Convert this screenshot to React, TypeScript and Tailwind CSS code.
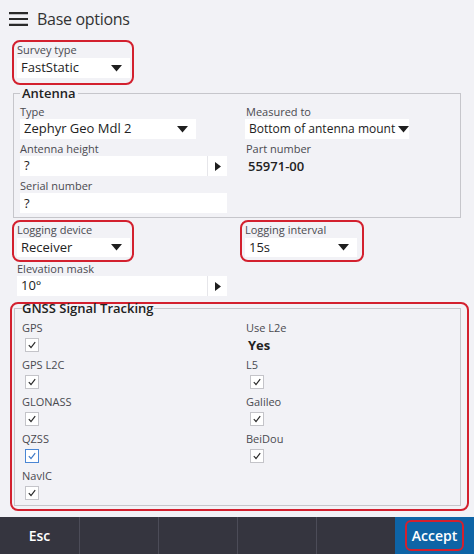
import React from 'react';

const font = { fontFamily: '"Open Sans", "Noto Sans", sans-serif' };

function Caret() {
    return (
        <svg width="11" height="7" viewBox="0 0 11 7" className="shrink-0">
            <path d="M0 0 H11 L5.5 6.5 Z" fill="#1f1f1f" />
        </svg>
    );
}

function Label({ children }: { children: React.ReactNode }) {
    return <div className="h-[14px] text-[11px] leading-[14px] text-[#4a4a50]">{children}</div>;
}

function Dropdown({
    value,
    width,
    h = 'h-[20px]',
    text = 'text-[13px]',
}: {
    value: string;
    width: string;
    h?: string;
    text?: string;
}) {
    return (
        <div className={`flex ${h} ${width} items-center justify-between gap-[3px] bg-white pl-[4px] pr-[8px]`}>
            <span className={`whitespace-nowrap ${text} font-medium text-[#222]`}>{value}</span>
            <Caret />
        </div>
    );
}

function ArrowInput({ value, width }: { value: string; width: string }) {
    return (
        <div className={`flex h-[20px] ${width} items-center bg-white`}>
            <span className="flex-1 pl-[4px] text-[13px] font-medium text-[#222]">{value}</span>
            <div className="flex h-full w-[20px] items-center justify-center border-l border-[#e6e6ea]">
                <svg width="6" height="9" viewBox="0 0 6 9">
                    <path d="M0 0 L6 4.5 L0 9 Z" fill="#1f1f1f" />
                </svg>
            </div>
        </div>
    );
}

function Check({ focused = false }: { focused?: boolean }) {
    return (
        <div
            className={`flex h-[14px] w-[14px] items-center justify-center bg-white border ${
                focused ? 'border-[#4a86d4]' : 'border-[#c4c4c9]'
            }`}
        >
            <svg width="12" height="12" viewBox="0 0 12 12">
                <path
                    d="M2.8 6.2 L5 8.5 L9.2 3.2"
                    fill="none"
                    stroke={focused ? '#3d78c6' : '#2a2a2a'}
                    strokeWidth="1.2"
                />
            </svg>
        </div>
    );
}

function CheckItem({ label, focused, inset = 'ml-[3px]' }: { label: string; focused?: boolean; inset?: string }) {
    return (
        <div>
            <Label>{label}</Label>
            <div className={`mt-[3px] ${inset}`}>
                <Check focused={focused} />
            </div>
        </div>
    );
}

export default function App() {
    return (
        <div className="flex h-[554px] w-[474px] flex-col overflow-hidden bg-[#f2f2f6] text-[#222]" style={font}>
            {/* header */}
            <header className="flex h-[38px] shrink-0 items-center gap-[9px] pl-[9px]">
                <svg width="19" height="14" viewBox="0 0 19 14">
                    <path d="M0 1.2 H19 M0 7 H19 M0 12.8 H19" stroke="#2a2a2a" strokeWidth="2.2" />
                </svg>
                <span className="text-[16px] tracking-[-0.3px] text-[#333]">Base options</span>
            </header>

            <div className="px-[12px]">
                {/* survey type */}
                <div className="mt-[2px] h-[45px] w-[122px] rounded-[8px] border-2 border-[#d3202e] px-[3px] pt-[1px]">
                    <Label>Survey type</Label>
                    <div className="mt-[1px]">
                        <Dropdown value="FastStatic" width="w-[113px]" />
                    </div>
                </div>

                {/* antenna */}
                <fieldset className="ml-[1px] w-[448px] border border-[#c6c6cb] pb-[4px] pl-[6px] pt-[4px]">
                    <legend className="px-[2px] text-[13px] font-semibold leading-[16px] text-[#222]">Antenna</legend>
                    <div className="grid grid-cols-[207px_1fr] gap-x-[18px] gap-y-[3px]">
                        <div>
                            <Label>Type</Label>
                            <Dropdown value="Zephyr Geo Mdl 2" width="w-[176px]" />
                        </div>
                        <div>
                            <div className="pl-[1px]">
                                <Label>Measured to</Label>
                            </div>
                            <Dropdown
                                value="Bottom of antenna mount"
                                width="w-[164px]"
                                h="h-[20px] pr-[4px]"
                                text="text-[12px]"
                            />
                        </div>
                        <div>
                            <Label>Antenna height</Label>
                            <ArrowInput value="?" width="w-[207px]" />
                        </div>
                        <div className="pl-[1px]">
                            <Label>Part number</Label>
                            <div className="h-[20px] pl-[2px] text-[13px] font-semibold leading-[20px]">55971-00</div>
                        </div>
                        <div>
                            <Label>Serial number</Label>
                            <div className="h-[20px] w-[207px] bg-white pl-[4px] text-[13px] font-medium leading-[20px]">?</div>
                        </div>
                    </div>
                </fieldset>

                {/* logging */}
                <div className="mt-[2px] flex items-start gap-[106px]">
                    <div className="h-[42px] w-[122px] rounded-[8px] border-2 border-[#d3202e] px-[3px] pt-[1px]">
                        <Label>Logging device</Label>
                        <div className="mt-[1px]">
                            <Dropdown value="Receiver" width="w-[113px]" h="h-[19px]" />
                        </div>
                    </div>
                    <div className="h-[42px] w-[124px] rounded-[8px] border-2 border-[#d3202e] px-[3px] pt-[1px]">
                        <Label>Logging interval</Label>
                        <div className="mt-[1px]">
                            <Dropdown value="15s" width="w-[112px]" h="h-[19px]" />
                        </div>
                    </div>
                </div>

                <div className="ml-[5px]">
                    <Label>Elevation mask</Label>
                    <ArrowInput value="10°" width="w-[210px]" />
                </div>

                {/* gnss */}
                <div className="-ml-[2px] mt-[6px] w-[459px] rounded-[8px] border-2 border-[#d3202e] pb-[3px] pl-[2px]">
                    <fieldset className="-mt-[2px] w-[447px] border border-[#c6c6cb] pb-[5px] pl-[7px] pt-[7px]">
                        <legend className="text-[13px] font-semibold leading-[12px] text-[#222]">GNSS Signal Tracking</legend>
                        <div className="grid grid-cols-[224px_1fr] gap-y-[6px]">
                            <CheckItem label="GPS" />
                            <div>
                                <Label>Use L2e</Label>
                                <div className="mt-[3px] h-[14px] pl-[2px] text-[13px] font-bold leading-[14px]">Yes</div>
                            </div>
                            <CheckItem label="GPS L2C" />
                            <CheckItem label="L5" inset="ml-[4px]" />
                            <CheckItem label="GLONASS" />
                            <CheckItem label="Galileo" inset="ml-[4px]" />
                            <CheckItem label="QZSS" focused />
                            <CheckItem label="BeiDou" inset="ml-[4px]" />
                            <CheckItem label="NavIC" />
                        </div>
                    </fieldset>
                </div>
            </div>

            {/* bottom bar */}
            <footer className="mt-auto grid h-[37px] shrink-0 grid-cols-6 bg-[#35353f]">
                <button className="flex items-center justify-center text-[14px] font-semibold text-white">Esc</button>
                <div className="border-l border-[#4c4c58]" />
                <div className="border-l border-[#4c4c58]" />
                <div className="border-l border-[#4c4c58]" />
                <div className="border-l border-[#4c4c58]" />
                <div className="flex items-center justify-center bg-[#0e64a6]">
                    <span className="rounded-[6px] border-2 border-[#d3202e] px-[5px] py-[3px] text-[14px] font-semibold text-white">
                        Accept
                    </span>
                </div>
            </footer>
        </div>
    );
}
